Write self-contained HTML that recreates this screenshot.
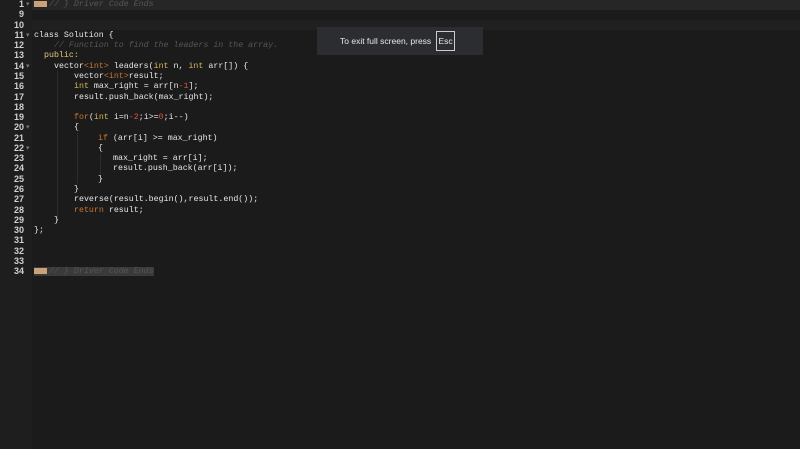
<!DOCTYPE html><html><head><style>
html,body{margin:0;padding:0;width:800px;height:449px;background:#1b1b1b;overflow:hidden}
.g{position:absolute;left:0;top:0;width:32px;height:449px;background:#1e1e1e}
.ln{position:absolute;left:0;width:24px;text-align:right;font:bold 9px "Liberation Sans",sans-serif;color:#d0d0d0}
.f{position:absolute;left:26px;font:7px "DejaVu Sans";color:#777}
.c{position:absolute;font:8.3px/10.28px "Liberation Mono",monospace;color:#e6e6e6;white-space:pre}
.k{color:#d6b55c}.o{color:#c9742e}.cm{color:#565656;font-style:italic}.n{color:#d9573a}.p{color:#e0c77e}
.band{position:absolute;left:32px;right:0;height:10px;background:#222}
.tag{display:inline-block;width:13px;height:6px;background:#c9a27a;vertical-align:middle;margin-right:2px}
.ig{position:absolute;width:1px;background:#2c2c2c}
</style></head><body>
<div class="band" style="top:0;background:#262626"></div>
<div class="band" style="top:20px;background:#202020"></div>
<div class="g"></div>
<div class="ig" style="left:57px;top:71px;height:152px"></div>
<div class="ig" style="left:77px;top:133px;height:50px"></div>
<div class="ig" style="left:100px;top:153px;height:30px"></div>
<div id="nums"></div>
<div id="code"></div>
<div style="position:absolute;left:317px;top:27px;width:166px;height:28px;background:#2b2d31;font:8.5px 'Liberation Sans',sans-serif;color:#e8e8e8">
<span style="position:absolute;left:23px;top:9px">To exit full screen, press</span>
<span style="position:absolute;left:119px;top:4px;width:17px;height:18px;border:1px solid #ccc;line-height:18px;text-align:center;font-size:8.5px">Esc</span>
</div>
<script>
var L=[1,9,10,11,12,13,14,15,16,17,18,19,20,21,22,23,24,25,26,27,28,29,30,31,32,33,34],h='';
var fold={1:1,11:1,14:1,20:1,22:1};
L.forEach(function(n,i){h+='<div class="ln" style="top:'+(i*10.28-1)+'px">'+n+'</div>';if(fold[n])h+='<div class="f" style="top:'+(i*10.28)+'px">▾</div>';});
document.getElementById('nums').innerHTML=h;
var C=[
[34,'<span class="tag"></span><span class="cm">// } Driver Code Ends</span>'],
[34,''],[34,''],
[34,'class Solution {'],
[54,'<span class="cm">// Function to find the leaders in the array.</span>'],
[44,'<span class="p">public:</span>'],
[54,'vector<span class="o">&lt;int&gt;</span> leaders(<span class="k">int</span> n, <span class="k">int</span> arr[]) {'],
[74,'vector<span class="o">&lt;int&gt;</span>result;'],
[74,'<span class="k">int</span> max_right = arr[n<span class="n">-1</span>];'],
[74,'result.push_back(max_right);'],
[74,''],
[74,'<span class="o">for</span>(<span class="k">int</span> i=n<span class="n">-2</span>;i&gt;=<span class="n">0</span>;i--)'],
[74,'{'],
[98,'<span class="o">if</span> (arr[i] &gt;= max_right)'],
[98,'{'],
[113,'max_right = arr[i];'],
[113,'result.push_back(arr[i]);'],
[98,'}'],
[74,'}'],
[74,'reverse(result.begin(),result.end());'],
[74,'<span class="o">return</span> result;'],
[54,'}'],
[34,'};'],
[34,''],[34,''],[34,''],
[34,'<span style="background:#3a3a3a"><span class="tag"></span><span class="cm">// } Driver Code Ends</span></span>']
],s='';
C.forEach(function(c,i){s+='<div class="c" style="left:'+c[0]+'px;top:'+(i*10.28)+'px">'+c[1]+'</div>';});
document.getElementById('code').innerHTML=s;
</script>
</body></html>
